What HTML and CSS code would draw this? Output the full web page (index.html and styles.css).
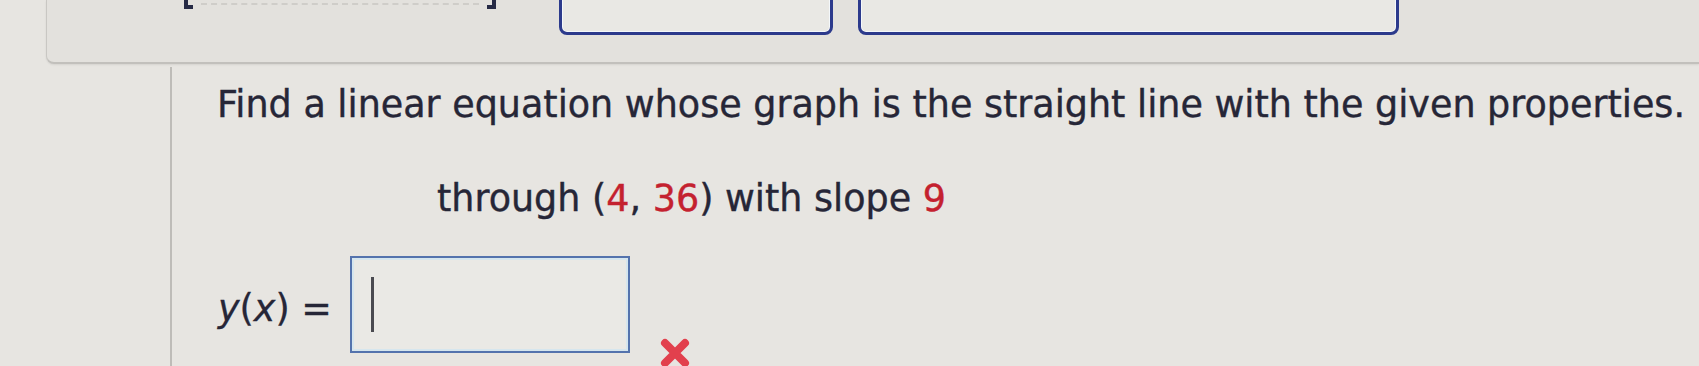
FILE: index.html
```html
<!DOCTYPE html>
<html lang="en">
<head>
    <meta charset="UTF-8">
    <meta name="viewport" content="width=device-width, initial-scale=1.0">
    <title>Question</title>
    <link rel="stylesheet" href="styles.css">
</head>
<body>

    <!-- barra superior (cortada en la foto) -->
    <div class="toolbar">
        <div class="crumb">
            <span class="bracket bracket-open"></span>
            <span class="crumb-fill"></span>
            <span class="bracket bracket-close"></span>
        </div>
        <div class="tab tab-first"></div>
        <div class="tab tab-second"></div>
    </div>

    <div class="main">
        <div class="side"></div>

        <div class="question">
            <h1 class="prompt">Find a linear equation whose graph is the straight line with the given properties.</h1>

            <p class="given">through (<span class="num">4</span>, <span class="num">36</span>) with slope <span class="num">9</span></p>

            <div class="answer">
                <span class="label"><i>y</i>(<i>x</i>) =</span>
                <div class="answer-box">
                    <span class="caret"></span>
                </div>
                <svg class="wrong" width="34" height="34" viewBox="0 0 34 34">
                    <path d="M7 7 L27 27 M27 7 L7 27" stroke="#e2404d" stroke-width="8" stroke-linecap="round"/>
                </svg>
            </div>
        </div>
    </div>

</body>
</html>
```

FILE: styles.css
```css
/* Reset */
* {
    margin: 0;
    padding: 0;
    box-sizing: border-box;
}

body {
    font-family: 'DejaVu Sans', Verdana, sans-serif;
    background-color: #e7e5e1;
    color: #262637;
    overflow: hidden;
}

/* Barra superior */
.toolbar {
    margin-left: 46px;
    height: 64px;
    display: flex;
    align-items: flex-end;
    padding-bottom: 27px;
    background-color: #e3e1dd;
    border-left: 1px solid #c9c7c3;
    border-bottom: 2px solid #c2c0bc;
    border-bottom-left-radius: 8px;
    box-shadow: 0 1px 2px rgba(0, 0, 0, 0.08);
    overflow: hidden;
}

.crumb {
    align-self: flex-start;
    width: 312px;
    margin-left: 137px;
    height: 9px;
    display: flex;
    align-items: flex-end;
}

.bracket {
    width: 9px;
    height: 9px;
    border-bottom: 4px solid #262a45;
}

.bracket-open {
    border-left: 4px solid #262a45;
}

.bracket-close {
    border-right: 4px solid #262a45;
}

.crumb-fill {
    flex: 1;
    margin: 0 8px 4px;
    border-bottom: 2px dashed #cfcdc9;
}

.tab {
    height: 60px;
    border: 3px solid #2c3a8c;
    border-radius: 8px;
    background-color: #e9e8e4;
    box-shadow: inset 0 0 0 1px #f4f8fb;
}

.tab-first {
    width: 274px;
    margin-left: 63px;
}

.tab-second {
    width: 541px;
    margin-left: 25px;
}

/* Contenido */
.main {
    display: flex;
    margin-top: 3px;
}

.side {
    width: 172px;
    min-height: 300px;
    border-right: 2px solid #bebcb8;
}

.question {
    padding: 16px 0 0 45px;
}

.prompt {
    font-size: 36.5px;
    font-weight: normal;
    line-height: 44px;
    white-space: nowrap;
    -webkit-text-stroke: 0.4px #262637;
}

.given {
    font-size: 36.5px;
    line-height: 44px;
    margin: 50px 0 0 220px;
    -webkit-text-stroke: 0.4px currentColor;
}

.num {
    color: #c4212f;
}

.answer {
    display: flex;
    align-items: center;
    margin-top: 35px;
}

.label {
    font-size: 36.5px;
    line-height: 44px;
    margin-left: 1px;
    margin-top: 8px;
    -webkit-text-stroke: 0.3px currentColor;
}

.answer-box {
    width: 280px;
    height: 97px;
    margin-left: 18px;
    display: flex;
    align-items: center;
    padding-left: 19px;
    background-color: #eae9e5;
    border: 2px solid #5473ad;
    box-shadow: inset 0 0 0 2px #d6e6ee;
}

.caret {
    width: 3px;
    height: 55px;
    background-color: #4a4a50;
}

.wrong {
    align-self: flex-end;
    margin-left: 28px;
    margin-bottom: -17px;
}
```
